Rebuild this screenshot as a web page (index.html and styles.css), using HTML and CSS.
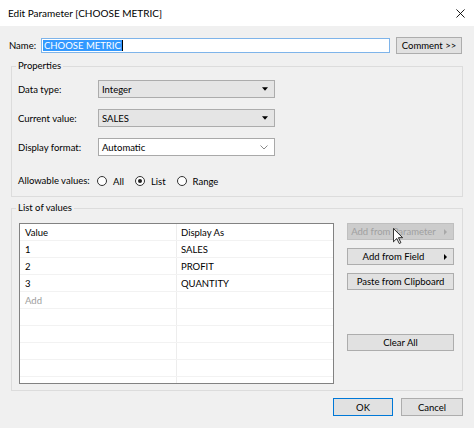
FILE: index.html
```html
<!DOCTYPE html>
<html>
<head>
<meta charset="utf-8">
<link rel="stylesheet" href="styles.css">
</head>
<body>
<div class="window">
  <div class="titlebar">
    <span class="title">Edit Parameter [CHOOSE METRIC]</span>
    <svg class="close" viewBox="0 0 10 10"><path d="M0.5 0.5 L9.5 9.5 M9.5 0.5 L0.5 9.5" stroke="#000" stroke-width="1" fill="none"/></svg>
  </div>
  <div class="content">
    <div class="name-row">
      <span class="name-label">Name:</span>
      <div class="name-input"><span class="sel">CHOOSE METRIC</span><span class="caret"></span></div>
      <button class="btn comment">Comment &gt;&gt;</button>
    </div>

    <div class="group props">
      <span class="legend">Properties</span>
      <div class="form">
        <span class="lbl">Data type:</span>
        <div class="combo"><span>Integer</span><svg class="tri-down" viewBox="0 0 7 4"><polygon points="0,0 7,0 3.5,4" fill="#000"/></svg></div>
        <span class="lbl">Current value:</span>
        <div class="combo"><span>SALES</span><svg class="tri-down" viewBox="0 0 7 4"><polygon points="0,0 7,0 3.5,4" fill="#000"/></svg></div>
        <span class="lbl">Display format:</span>
        <div class="combo white"><span>Automatic</span><svg class="chev" viewBox="0 0 8 5"><polyline points="0.5,0.5 4,4 7.5,0.5" stroke="#8a8a8a" stroke-width="1" fill="none"/></svg></div>
        <span class="lbl allow">Allowable values:</span>
        <div class="radios">
          <span class="radio"><span class="dot"></span>All</span>
          <span class="radio"><span class="dot on"></span>List</span>
          <span class="radio"><span class="dot"></span>Range</span>
        </div>
      </div>
    </div>

    <div class="group list">
      <span class="legend">List of values</span>
      <div class="table">
        <div class="row"><span class="cell">Value</span><span class="cell">Display As</span></div>
        <div class="row"><span class="cell">1</span><span class="cell">SALES</span></div>
        <div class="row"><span class="cell">2</span><span class="cell">PROFIT</span></div>
        <div class="row"><span class="cell">3</span><span class="cell">QUANTITY</span></div>
        <div class="row"><span class="cell add">Add</span><span class="cell"></span></div>
        <div class="row"><span class="cell"></span><span class="cell"></span></div>
        <div class="row"><span class="cell"></span><span class="cell"></span></div>
        <div class="row"><span class="cell"></span><span class="cell"></span></div>
        <div class="row"><span class="cell"></span><span class="cell"></span></div>
        <div class="row"><span class="cell"></span><span class="cell"></span></div>
      </div>
      <div class="side">
        <button class="btn arrow disabled">Add from Parameter<span class="tri"></span></button>
        <button class="btn arrow">Add from Field<span class="tri"></span></button>
        <button class="btn">Paste from Clipboard</button>
        <button class="btn clear">Clear All</button>
      </div>
    </div>

    <div class="footer">
      <button class="btn ok">OK</button>
      <button class="btn cancel">Cancel</button>
    </div>
  </div>
  <svg class="cursor" viewBox="0 0 12 19"><path d="M0.5 0.5 L0.5 16.5 L4.5 12.5 L7.5 18.5 L9.5 17.5 L6.5 11.5 L11.5 11.5 Z" fill="#fff" stroke="#000" stroke-width="1" stroke-linejoin="miter"/></svg>
</div>
</body>
</html>
```

FILE: styles.css
```css
* { box-sizing: border-box; }
html, body { margin: 0; padding: 0; }
body {
  width: 474px;
  height: 428px;
  overflow: hidden;
  background: #f0f0f0;
  font-family: Lato, "Liberation Sans", sans-serif;
  font-size: 9.5px;
  color: #000;
}
.window {
  position: relative;
  width: 474px;
  height: 428px;
  display: flex;
  flex-direction: column;
}
.titlebar {
  height: 26px;
  background: #fff;
  display: flex;
  align-items: center;
  justify-content: space-between;
  padding: 0 9px 0 8px;
}
.title { font-size: 10px; }
.close { width: 9px; height: 9px; display: block; }

.content {
  padding: 11px 11px 0 9px;
  display: flex;
  flex-direction: column;
}
.name-row {
  display: flex;
  align-items: center;
  height: 17px;
  margin-right: 1px;
}
.name-label { width: 32px; }
.name-input {
  width: 349px;
  height: 15px;
  border: 1px solid #7eb4ea;
  background: #fff;
  display: flex;
  align-items: center;
  padding-left: 1px;
}
.sel {
  background: #3399ff;
  color: #fff;
  line-height: 11px;
  padding: 0 1px;
}
.caret { width: 1px; height: 11px; background: #000; }

.btn {
  font: inherit;
  color: #000;
  background: #e1e1e1;
  border: 1px solid #adadad;
  padding: 0;
  margin: 0;
  height: 17px;
  display: flex;
  align-items: center;
  justify-content: center;
  position: relative;
}
.comment { width: 66px; margin-left: 6px; }

.group {
  position: relative;
  border: 1px solid #dcdcdc;
  margin-left: 2px;
}
.legend {
  position: absolute;
  top: -7px;
  left: 4px;
  padding: 0 2px;
  background: #f0f0f0;
  line-height: 12px;
}
.props {
  margin-top: 12px;
  padding: 13px 0 6px 6px;
}
.form {
  display: grid;
  grid-template-columns: 80px 177px;
  grid-template-rows: 18px 18px 18px 23px;
  row-gap: 11px;
  align-items: center;
}
.lbl.allow { align-self: end; line-height: 18px; }
.combo {
  height: 18px;
  border: 1px solid #acacac;
  background: #e5e5e5;
  display: flex;
  align-items: center;
  justify-content: space-between;
  padding: 0 6px 0 3px;
}
.combo.white { background: #fff; border-color: #a9a9a9; }
.tri-down { width: 6px; height: 4px; display: block; }
.chev { width: 8px; height: 5px; display: block; }
.radios {
  align-self: end;
  height: 18px;
  display: flex;
  align-items: center;
  gap: 11px;
  margin-left: -1px;
}
.radio { display: flex; align-items: center; gap: 6px; }
.dot {
  width: 10px;
  height: 10px;
  border: 1px solid #333;
  border-radius: 50%;
  background: #fff;
  display: flex;
  align-items: center;
  justify-content: center;
}
.dot.on::after {
  content: "";
  width: 4px;
  height: 4px;
  border-radius: 50%;
  background: #222;
}

.list {
  margin-top: 11px;
  padding: 14px 0 6px 7px;
  display: flex;
  align-items: flex-start;
}
.table {
  width: 315px;
  height: 161px;
  border: 1px solid #828282;
  background: #fff;
  overflow: hidden;
}
.row {
  display: grid;
  grid-template-columns: 157px 1fr;
  height: 17px;
  border-bottom: 1px solid #f2f2f2;
}
.cell {
  display: flex;
  align-items: center;
  padding-left: 4px;
}
.cell:first-child {
  border-right: 1px solid #ededed;
  padding-left: 5px;
}
.cell.add { color: #9d9d9d; }

.side {
  margin-left: 13px;
  width: 107px;
  display: flex;
  flex-direction: column;
  gap: 8px;
}
.side .btn { width: 107px; }
.btn.arrow { padding-right: 14px; }
.tri {
  position: absolute;
  right: 6px;
  top: 5px;
  width: 0;
  height: 0;
  border-left: 3px solid #000;
  border-top: 3px solid transparent;
  border-bottom: 3px solid transparent;
}
.btn.disabled {
  background: #cccccc;
  border-color: #bfbfbf;
  color: #a0a0a0;
}
.btn.disabled .tri { border-left-color: #a8a8a8; }
.clear { margin-top: 36px; }

.footer {
  margin-top: 7px;
  display: flex;
  justify-content: flex-end;
  gap: 8px;
}
.footer .btn { height: 18px; }
.ok { width: 60px; border-color: #0078d7; }
.cancel { width: 62px; }

.cursor {
  position: absolute;
  left: 393px;
  top: 228px;
  width: 10px;
  height: 16px;
}
```
